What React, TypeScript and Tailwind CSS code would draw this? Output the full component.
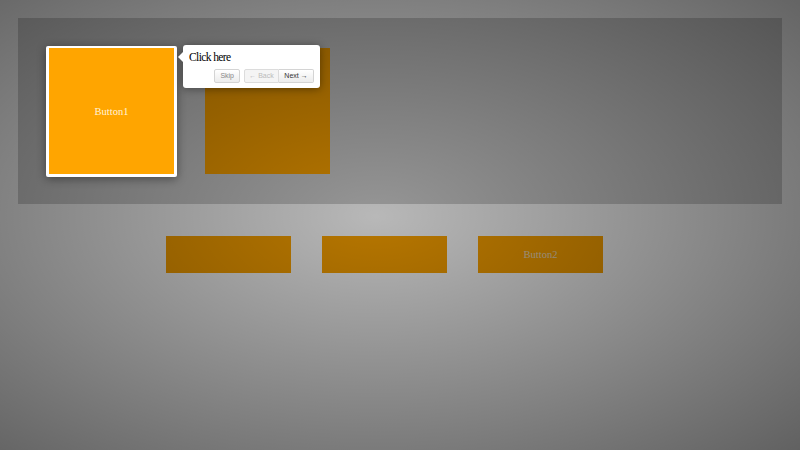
import React from "react";

export default function App() {
  return (
    <div className="relative w-[800px] h-[450px] overflow-hidden bg-white" style={{ fontFamily: '"Liberation Serif", serif' }}>
      {/* page content */}
      <div className="pt-[18px] px-[18px]">
        <div className="h-[186px] bg-[#d0d0d0] pt-[30px] pl-[31px] flex gap-[31px]">
          <div className="relative z-30 w-[125px] h-[126px] bg-[#ffa500] flex items-center justify-center pt-[1px] text-[10.5px] text-[#fff3dc]">
            Button1
          </div>
          <div className="w-[125px] h-[126px] bg-[#ffa500]" />
        </div>
      </div>
      <div className="mt-[32px] pl-[166px] flex gap-[31px]">
        <div className="w-[125px] h-[37px] bg-[#ffa500]" />
        <div className="w-[125px] h-[37px] bg-[#ffa500]" />
        <div className="w-[125px] h-[37px] bg-[#ffa500] flex items-center justify-center pt-[1px] text-[10.5px] text-[#f2e0c0]">
          Button2
        </div>
      </div>

      {/* overlay */}
      <div className="absolute inset-0 z-10 bg-[radial-gradient(ellipse_farthest-corner_at_47%_48%,rgba(0,0,0,0.28)_0%,rgba(0,0,0,0.62)_100%)]" />

      {/* helper layer */}
      <div className="absolute z-20 left-[46px] top-[46px] w-[131px] h-[131px] bg-white rounded-[2px] shadow-[0_2px_10px_rgba(0,0,0,0.4)]" />

      {/* tooltip */}
      <div className="absolute z-40 left-[183px] top-[45px] w-[137px] h-[43px] bg-white rounded-[3px] shadow-[0_1px_8px_rgba(0,0,0,0.4)]">
        <div className="absolute left-[-5px] top-[7px] w-0 h-0 border-y-[5px] border-y-transparent border-r-[5px] border-r-white" />
        <div className="pl-[6px] pt-[5px] text-[11.5px] leading-[14px] tracking-[-0.6px] text-black">Click here</div>
        <div className="absolute right-[6px] top-[24px] flex" style={{ fontFamily: '"Liberation Sans", Arial, sans-serif' }}>
          <div className="h-[14px] px-[5px] mr-[4px] flex items-center text-[7px] text-[#888] border border-[#d4d4d4] rounded-[2px] bg-[linear-gradient(#ffffff,#ececec)]">Skip</div>
          <div className="h-[14px] w-[35px] flex items-center justify-center text-[7px] text-[#bbb] border border-[#dcdcdc] rounded-l-[2px] bg-[#f4f4f4]">← Back</div>
          <div className="h-[14px] w-[35px] flex items-center justify-center text-[7px] text-[#333] border border-l-0 border-[#d4d4d4] rounded-r-[2px] bg-[linear-gradient(#ffffff,#ececec)]">Next →</div>
        </div>
      </div>
    </div>
  );
}
